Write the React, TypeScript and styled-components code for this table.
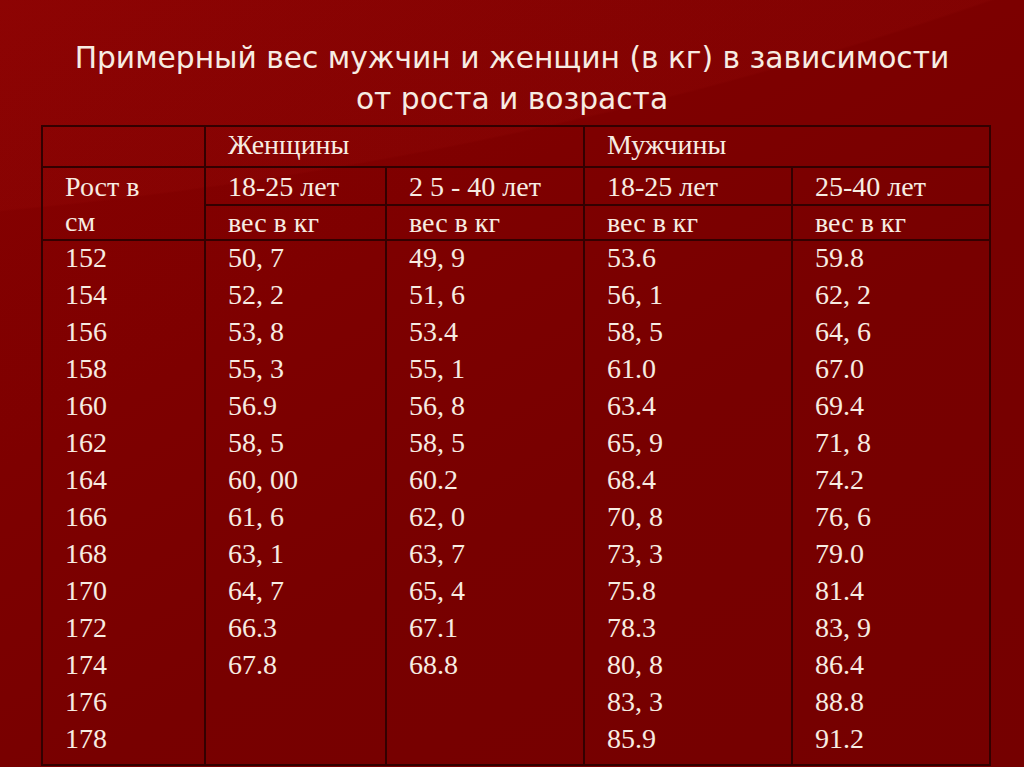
import React from 'react'
import { styled, createGlobalStyle } from 'styled-components'

const GlobalStyle = createGlobalStyle`
    html, body {
        margin: 0;
        padding: 0;
        background: #780000;
    }
`

const Slide = styled.div`
    width: 1024px;
    height: 767px;
    overflow: hidden;
    box-sizing: border-box;
    padding-top: 37px;
    display: flex;
    flex-direction: column;
    color: #f7ece2;
    background:
        radial-gradient(3155px 2230px at -400px -2000px, rgba(255, 60, 50, 0.045) 99.9%, rgba(0, 0, 0, 0) 100%),
        linear-gradient(150deg, #880101 0%, #7e0000 35%, #780000 60%, #750000 100%);
`

const Title = styled.h1`
    margin: 0;
    text-align: center;
    font-family: "DejaVu Sans", "Liberation Sans", sans-serif;
    font-weight: normal;
    font-size: 29.7px;
    line-height: 41px;
`

const TableWrap = styled.div`
    margin-top: 6px;
    padding-left: 41px;
`

const Table = styled.table`
    border-collapse: collapse;
    table-layout: fixed;
    width: 950px;
    font-family: "Liberation Serif", "Times New Roman", serif;
    font-size: 28px;
    line-height: 33px;
`

const Row = styled.tr<{ $h: number }>`
    height: ${p => p.$h}px;
`

// $top: small nudge so each header baseline lands where the slide has it
const Cell = styled.td<{ $top?: number; $lh?: number }>`
    border: 2px solid #330000;
    padding: ${p => p.$top ?? 0}px 0 0 22px;
    line-height: ${p => p.$lh ?? 33}px;
    vertical-align: top;
    white-space: nowrap;
    overflow: hidden;
`

const Value = styled.div`
    height: 37px;
`

const heights = [152, 154, 156, 158, 160, 162, 164, 166, 168, 170, 172, 174, 176, 178].map(String)

const columns: string[][] = [
    heights,
    ['50, 7', '52, 2', '53, 8', '55, 3', '56.9', '58, 5', '60, 00', '61, 6', '63, 1', '64, 7', '66.3', '67.8'],
    ['49, 9', '51, 6', '53.4', '55, 1', '56, 8', '58, 5', '60.2', '62, 0', '63, 7', '65, 4', '67.1', '68.8'],
    ['53.6', '56, 1', '58, 5', '61.0', '63.4', '65, 9', '68.4', '70, 8', '73, 3', '75.8', '78.3', '80, 8', '83, 3', '85.9'],
    ['59.8', '62, 2', '64, 6', '67.0', '69.4', '71, 8', '74.2', '76, 6', '79.0', '81.4', '83, 9', '86.4', '88.8', '91.2'],
]

const ages = ['18-25 лет', '2 5 - 40 лет', '18-25 лет', '25-40 лет']

const App: React.FC = () => {
    return (
        <>
            <GlobalStyle />
            <Slide>
                <Title>
                    Примерный вес мужчин и женщин (в кг) в зависимости<br />
                    от роста и возраста
                </Title>
                <TableWrap>
                    <Table>
                        <colgroup>
                            <col style={{ width: 163 }} />
                            <col style={{ width: 181 }} />
                            <col style={{ width: 198 }} />
                            <col style={{ width: 208 }} />
                            <col style={{ width: 198 }} />
                        </colgroup>
                        <tbody>
                            <Row $h={41}>
                                <Cell></Cell>
                                <Cell colSpan={2} $top={1}>Женщины</Cell>
                                <Cell colSpan={2} $top={1}>Мужчины</Cell>
                            </Row>
                            <Row $h={37}>
                                <Cell rowSpan={2} $top={1} $lh={35}>Рост в<br />см</Cell>
                                {ages.map((a, i) => <Cell key={i} $top={2}>{a}</Cell>)}
                            </Row>
                            <Row $h={35}>
                                {ages.map((_, i) => <Cell key={i}>вес в кг</Cell>)}
                            </Row>
                            <Row $h={525}>
                                {columns.map((col, i) => (
                                    <Cell key={i}>
                                        {col.map((v, j) => <Value key={j}>{v}</Value>)}
                                    </Cell>
                                ))}
                            </Row>
                        </tbody>
                    </Table>
                </TableWrap>
            </Slide>
        </>
    )
}

export default App
